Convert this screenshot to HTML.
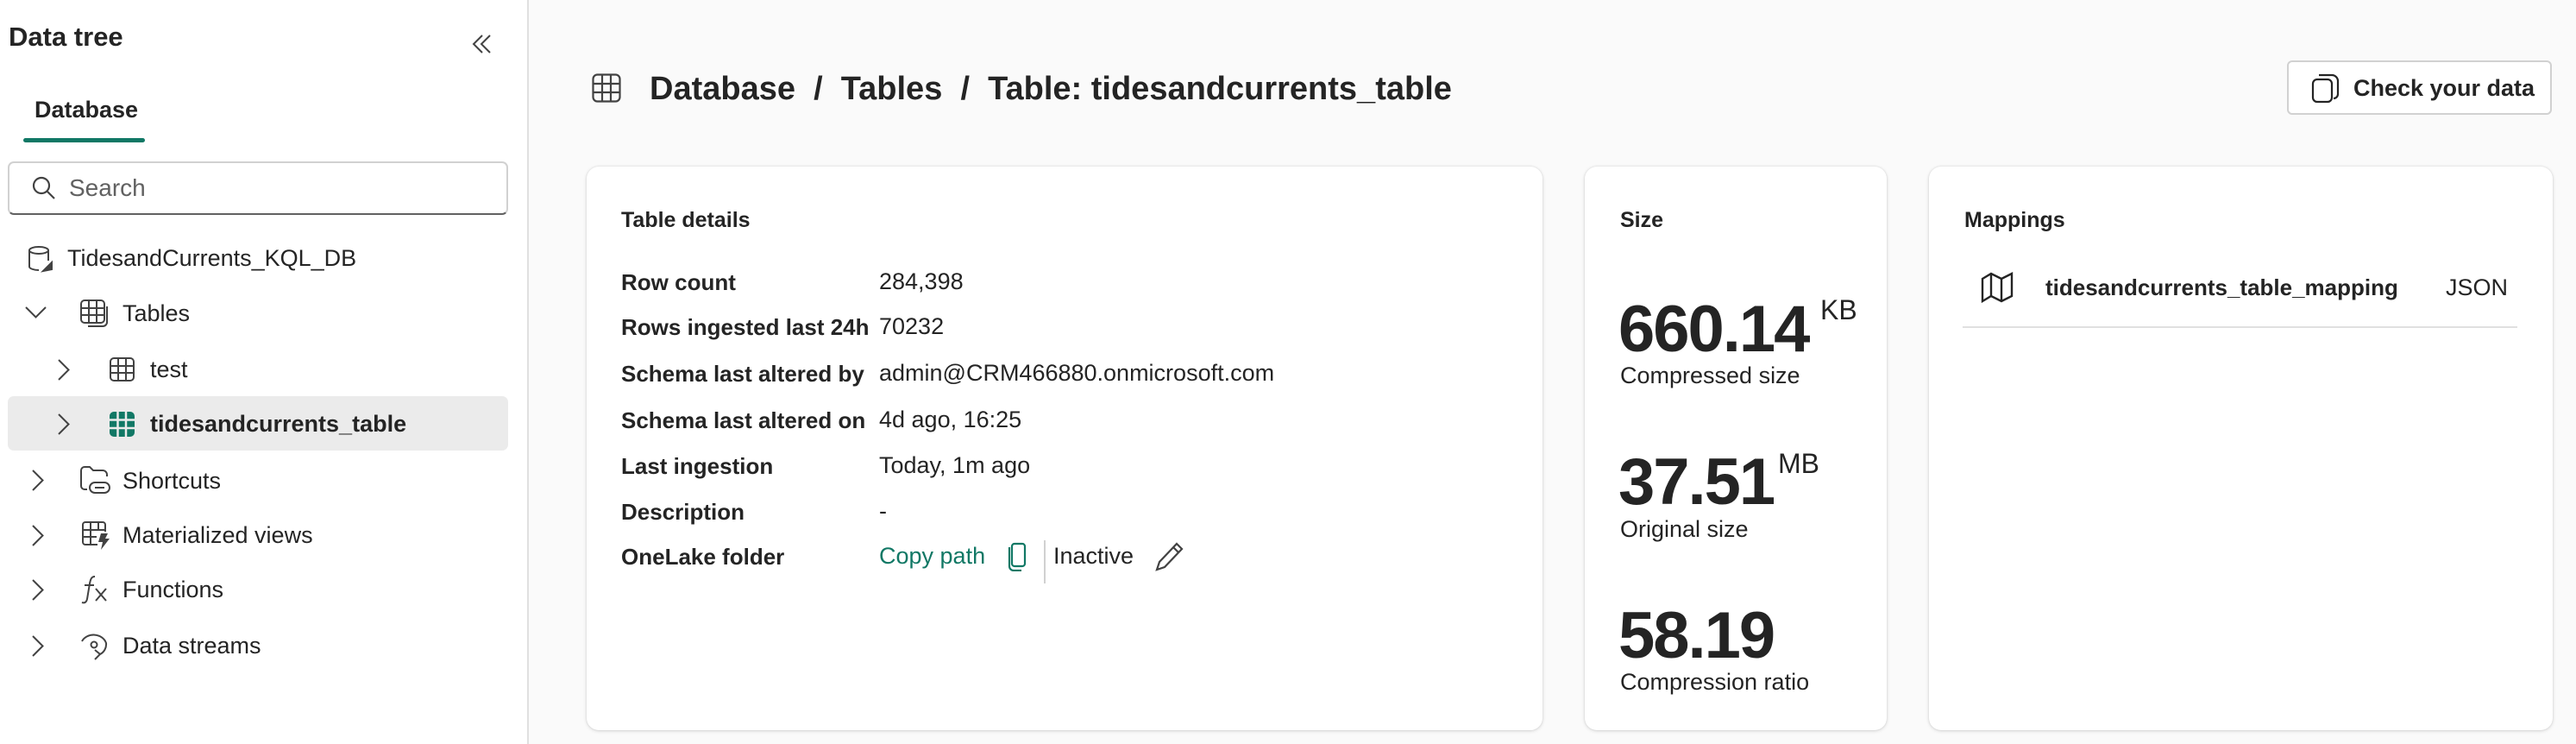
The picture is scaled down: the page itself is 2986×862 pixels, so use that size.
<!DOCTYPE html>
<html><head><meta charset="utf-8"><style>
*{margin:0;padding:0;box-sizing:border-box}
body{width:2986px;height:862px;overflow:hidden;background:#fafafa;font-family:"Liberation Sans",sans-serif;color:#242424;position:relative}
.a{position:absolute;line-height:1;white-space:nowrap}
.side{position:absolute;left:0;top:0;width:613px;height:862px;background:#fff;border-right:2px solid #e0e0e0}
.card{position:absolute;top:193px;height:653px;background:#fff;border-radius:14px;box-shadow:0 1px 4px rgba(0,0,0,.14),0 0 2px rgba(0,0,0,.1)}
.lb{font-weight:bold;font-size:26px}
.vl{font-size:27px}
.t{font-size:27px;color:#242424}
svg{position:absolute}
.big{font-size:76px;font-weight:bold;letter-spacing:-2px}
.sup{font-size:32px}
</style></head><body>
<div class="side">
<div class="a" style="left:10px;top:27px;font-size:31px;font-weight:bold">Data tree</div>
<svg style="left:546px;top:38px" width="26" height="26" viewBox="0 0 26 26" fill="none" stroke="#424242" stroke-width="2"><path d="M13 3 3 13l10 10M22 3 12 13l10 10"/></svg>
<div class="a" style="left:40px;top:114px;font-size:27px;font-weight:bold">Database</div>
<div style="position:absolute;left:27px;top:160px;width:141px;height:5px;border-radius:3px;background:#117865"></div>
<div style="position:absolute;left:9px;top:187px;width:580px;height:62px;border:2px solid #d1d1d1;border-bottom-color:#616161;border-radius:7px"></div>
<svg style="left:36px;top:203px" width="30" height="30" viewBox="0 0 30 30" fill="none" stroke="#424242" stroke-width="2.2"><circle cx="12" cy="12" r="9"/><path d="M19 19l8 8"/></svg>
<div class="a" style="left:80px;top:204px;font-size:28px;color:#616161">Search</div>

<svg style="left:32px;top:284px" width="32" height="32" viewBox="0 0 32 32" fill="none" stroke="#424242" stroke-width="2"><ellipse cx="13" cy="6" rx="11" ry="4"/><path d="M2 6v19c0 2 5 4 11 4M24 6v12"/><path d="M18 30l10-10v8z" fill="#424242"/></svg>
<div class="a t" style="left:78px;top:286px">TidesandCurrents_KQL_DB</div>

<svg style="left:29px;top:354px" width="25" height="16" viewBox="0 0 25 16" fill="none" stroke="#424242" stroke-width="2"><path d="M1 2l11.5 11.5L24 2"/></svg>
<svg style="left:93px;top:347px" width="34" height="33" viewBox="0 0 34 33" fill="none" stroke="#424242" stroke-width="2"><rect x="1" y="1" width="27" height="26" rx="4"/><path d="M1 10h27M1 18h27M10 1v26M19 1v26M31 8v17a5 5 0 0 1-5 6H9"/></svg>
<div class="a t" style="left:142px;top:350px">Tables</div>

<svg style="left:66px;top:416px" width="16" height="25" viewBox="0 0 16 25" fill="none" stroke="#424242" stroke-width="2"><path d="M2 1l11.5 11.5L2 24"/></svg>
<svg style="left:127px;top:414px" width="29" height="28" viewBox="0 0 29 28" fill="none" stroke="#424242" stroke-width="2"><rect x="1" y="1" width="27" height="26" rx="4"/><path d="M1 10h27M1 18h27M10 1v26M19 1v26"/></svg>
<div class="a t" style="left:174px;top:415px">test</div>

<div style="position:absolute;left:9px;top:459px;width:580px;height:63px;border-radius:7px;background:#ebebeb"></div>
<svg style="left:66px;top:479px" width="16" height="25" viewBox="0 0 16 25" fill="none" stroke="#424242" stroke-width="2"><path d="M2 1l11.5 11.5L2 24"/></svg>
<svg style="left:127px;top:477px" width="29" height="29" viewBox="0 0 29 29"><rect x="0" y="0" width="29" height="29" rx="5" fill="#117865"/><path d="M0 9.5h29M0 19h29M9.5 0v29M19 0v29" stroke="#ebebeb" stroke-width="2.5"/></svg>
<div class="a t" style="left:174px;top:478px;font-weight:bold">tidesandcurrents_table</div>

<svg style="left:36px;top:544px" width="16" height="25" viewBox="0 0 16 25" fill="none" stroke="#424242" stroke-width="2"><path d="M2 1l11.5 11.5L2 24"/></svg>
<svg style="left:93px;top:540px" width="35" height="33" viewBox="0 0 35 33" fill="none" stroke="#424242" stroke-width="2"><path d="M8 27H5a4 4 0 0 1-4-4V5a4 4 0 0 1 4-4h6l4 4h11a5 5 0 0 1 5 5v2"/><rect x="11" y="19" width="23" height="12" rx="6"/><path d="M17 25h11"/></svg>
<div class="a t" style="left:142px;top:544px">Shortcuts</div>

<svg style="left:36px;top:608px" width="16" height="25" viewBox="0 0 16 25" fill="none" stroke="#424242" stroke-width="2"><path d="M2 1l11.5 11.5L2 24"/></svg>
<svg style="left:95px;top:604px" width="33" height="34" viewBox="0 0 33 34" fill="none" stroke="#424242" stroke-width="2"><path d="M18 27H4a3 3 0 0 1-3-3V4a3 3 0 0 1 3-3h20a3 3 0 0 1 3 3v8M1 10h26M1 18h16M10 1v26M19 1v9"/><path d="M22 14h8l-3 6h5l-10 13 2-9h-5z" fill="#424242" stroke="none"/></svg>
<div class="a t" style="left:142px;top:607px">Materialized views</div>

<svg style="left:36px;top:671px" width="16" height="25" viewBox="0 0 16 25" fill="none" stroke="#424242" stroke-width="2"><path d="M2 1l11.5 11.5L2 24"/></svg>
<svg style="left:93px;top:666px" width="32" height="34" viewBox="0 0 32 34" fill="none" stroke="#424242" stroke-width="2"><path d="M17 2c-4 0-5 3-6 8l-3 18c-1 4-3 5-6 4M5 12h11M18 16l12 14M30 16 18 30"/></svg>
<div class="a t" style="left:142px;top:670px">Functions</div>

<svg style="left:36px;top:736px" width="16" height="25" viewBox="0 0 16 25" fill="none" stroke="#424242" stroke-width="2"><path d="M2 1l11.5 11.5L2 24"/></svg>
<svg style="left:93px;top:731px" width="33" height="34" viewBox="0 0 33 34" fill="none" stroke="#424242" stroke-width="2"><path d="M2 12A15 13 0 0 1 30 14a13 13 0 0 1-7 13M17 33l6-6-6-5"/><circle cx="16" cy="16" r="3.5"/></svg>
<div class="a t" style="left:142px;top:735px">Data streams</div>
</div>

<svg style="left:686px;top:85px" width="34" height="34" viewBox="0 0 34 34" fill="none" stroke="#424242" stroke-width="2.2"><rect x="1.5" y="1.5" width="31" height="31" rx="5"/><path d="M1.5 12h31M1.5 22h31M12 1.5v31M22 1.5v31"/></svg>
<div class="a" style="left:753px;top:84px;font-size:38px;font-weight:bold">Database&nbsp;&nbsp;/&nbsp;&nbsp;Tables&nbsp;&nbsp;/&nbsp;&nbsp;Table: tidesandcurrents_table</div>

<div style="position:absolute;left:2651px;top:70px;width:307px;height:63px;background:#fff;border:2px solid #d1d1d1;border-radius:6px"></div>
<svg style="left:2679px;top:84px" width="34" height="36" viewBox="0 0 34 36" fill="none" stroke="#242424" stroke-width="2.2"><rect x="2" y="8" width="22" height="26" rx="5"/><path d="M9 3h15a7 7 0 0 1 7 7v15a5 5 0 0 1-5 5"/></svg>
<div class="a" style="left:2728px;top:89px;font-size:27px;font-weight:bold">Check your data</div>

<div class="card" style="left:680px;width:1108px"></div>
<div class="a lb" style="left:720px;top:243px;font-size:25px">Table details</div>
<div class="a lb" style="left:720px;top:314px">Row count</div><div class="a vl" style="left:1019px;top:313px">284,398</div>
<div class="a lb" style="left:720px;top:366px">Rows ingested last 24h</div><div class="a vl" style="left:1019px;top:365px">70232</div>
<div class="a lb" style="left:720px;top:420px">Schema last altered by</div><div class="a vl" style="left:1019px;top:419px">admin@CRM466880.onmicrosoft.com</div>
<div class="a lb" style="left:720px;top:474px">Schema last altered on</div><div class="a vl" style="left:1019px;top:473px">4d ago, 16:25</div>
<div class="a lb" style="left:720px;top:527px">Last ingestion</div><div class="a vl" style="left:1019px;top:526px">Today, 1m ago</div>
<div class="a lb" style="left:720px;top:580px">Description</div><div class="a vl" style="left:1019px;top:579px">-</div>
<div class="a lb" style="left:720px;top:632px">OneLake folder</div><div class="a vl" style="left:1019px;top:631px;color:#117865">Copy path</div>
<svg style="left:1168px;top:628px" width="22" height="34" viewBox="0 0 22 34" fill="none" stroke="#117865" stroke-width="2.2"><rect x="5" y="2" width="15" height="26" rx="3"/><path d="M2 6v22a5 5 0 0 0 5 5h9"/></svg>
<div style="position:absolute;left:1210px;top:626px;width:2px;height:50px;background:#d1d1d1"></div>
<div class="a vl" style="left:1221px;top:631px">Inactive</div>
<svg style="left:1339px;top:627px" width="34" height="36" viewBox="0 0 34 36" fill="none" stroke="#424242" stroke-width="2.2"><path d="M25 3l6 6L11 30l-9 3 3-9zM21 7l6 6"/></svg>

<div class="card" style="left:1837px;width:350px"></div>
<div class="a lb" style="left:1878px;top:243px;font-size:25px">Size</div>
<div class="a big" style="left:1876px;top:344px">660.14</div><div class="a sup" style="left:2110px;top:343px">KB</div>
<div class="a vl" style="left:1878px;top:422px">Compressed size</div>
<div class="a big" style="left:1876px;top:521px">37.51</div><div class="a sup" style="left:2061px;top:521px">MB</div>
<div class="a vl" style="left:1878px;top:600px">Original size</div>
<div class="a big" style="left:1876px;top:699px">58.19</div>
<div class="a vl" style="left:1878px;top:777px">Compression ratio</div>

<div class="card" style="left:2236px;width:723px"></div>
<div class="a lb" style="left:2277px;top:243px;font-size:25px">Mappings</div>
<svg style="left:2296px;top:315px" width="38" height="36" viewBox="0 0 38 36" fill="none" stroke="#242424" stroke-width="2.4"><path d="M2 8l10-6 12 6 12-6v26l-12 6-12-6-10 6zM12 2v26M24 8v26"/></svg>
<div class="a" style="left:2371px;top:320px;font-size:26px;font-weight:bold">tidesandcurrents_table_mapping</div>
<div class="a vl" style="left:2835px;top:320px">JSON</div>
<div style="position:absolute;left:2275px;top:378px;width:643px;height:2px;background:#e0e0e0"></div>
</body></html>
